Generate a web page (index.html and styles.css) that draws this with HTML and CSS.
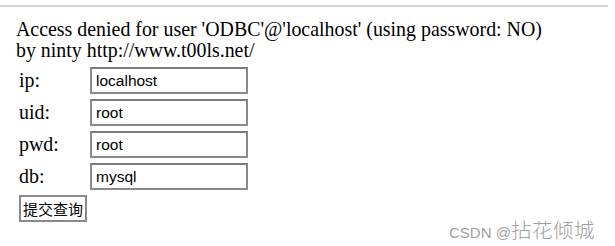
FILE: index.html
```html
<!DOCTYPE html>
<html>
<head>
<meta charset="utf-8">
<link rel="stylesheet" href="styles.css">
</head>
<body>
<div class="topline"></div>
<div class="page">
  <div class="msg">Access denied for user 'ODBC'@'localhost' (using password: NO)<br>by ninty http://www.t00ls.net/</div>
  <form class="form">
    <div class="row"><span class="lbl">ip:</span><input class="inp" value="localhost"></div>
    <div class="row"><span class="lbl">uid:</span><input class="inp" value="root"></div>
    <div class="row"><span class="lbl">pwd:</span><input class="inp" value="root"></div>
    <div class="row"><span class="lbl">db:</span><input class="inp" value="mysql"></div>
    <button type="button" class="btn">提交查询</button>
  </form>
</div>
<div class="mark">CSDN @<span class="cjk">拈花倾城</span></div>
</body>
</html>
```
FILE: styles.css
```css
html, body { margin: 0; padding: 0; background: #fff; }
body { width: 615px; height: 246px; position: relative; overflow: hidden; font-family: "Liberation Serif", serif; color: #000; }
.topline { height: 2px; background: #d4d4d4; margin-top: 5px; width: 608px; }
.page { padding: 12px 0 0 16px; }
.msg { font-size: 19.9px; line-height: 21px; }
.form { margin: 6px 0 0 3px; display: flex; flex-direction: column; gap: 5px; align-items: flex-start; }
.row { display: flex; align-items: center; height: 27px; }
.lbl { width: 71px; font-size: 19.9px; }
.inp { box-sizing: border-box; width: 158px; height: 27px; border: 2px solid #8a8a8a; border-top-color: #7a7a7a; padding: 0 4px; font-family: "Liberation Sans", Arial, sans-serif; font-size: 15.5px; color: #000; outline: none; margin: 0; }
.btn { box-sizing: border-box; margin-top: 0; height: 27px; padding: 0 2px; border: 2px solid #8a8a8a; background: #fff; font-family: "Noto Sans CJK SC", sans-serif; font-size: 15px; color: #000; }
.mark { position: absolute; left: 449px; top: 214px; font-family: "Liberation Sans", "Noto Sans CJK SC", sans-serif; font-size: 15px; color: #a0a0a0; }
.cjk { font-family: "Noto Sans CJK SC", sans-serif; font-size: 20.5px; font-weight: 300; letter-spacing: 0.5px; }
```
